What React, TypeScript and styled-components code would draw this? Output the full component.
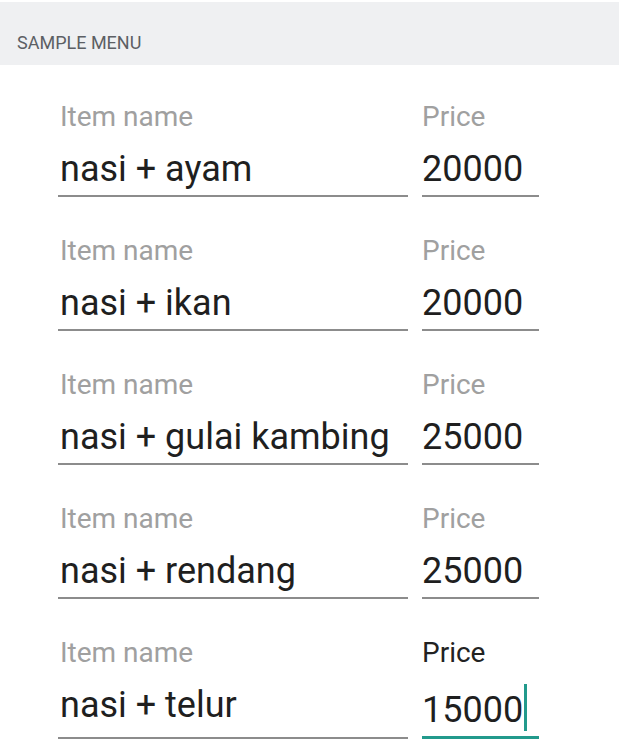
import styled, { createGlobalStyle } from "styled-components";

const GlobalStyle = createGlobalStyle`
  html, body {
    margin: 0;
    padding: 0;
    background: #ffffff;
  }
  body {
    font-family: Roboto, "Noto Sans", Arial, sans-serif;
  }
`;

const menu = [
  { name: "nasi + ayam", price: "20000" },
  { name: "nasi + ikan", price: "20000" },
  { name: "nasi + gulai kambing", price: "25000" },
  { name: "nasi + rendang", price: "25000" },
  { name: "nasi + telur", price: "15000", focused: true },
];

function App() {
  return (
    <>
      <GlobalStyle />
      <Page>
        <Header>SAMPLE MENU</Header>
        <List>
          {menu.map((item, index) => (
            <Row key={index}>
              <Field $width={350} $inset={2}>
                <Label>Item name</Label>
                <Value>{item.name}</Value>
              </Field>
              <Field $width={117} $focused={item.focused}>
                <Label $focused={item.focused}>Price</Label>
                <Value>
                  {item.price}
                  {item.focused && <Caret />}
                </Value>
              </Field>
            </Row>
          ))}
        </List>
      </Page>
    </>
  );
}
export default App;

const Page = styled.div`
  width: 619px;
  min-height: 750px;
  background: #ffffff;
  padding-top: 2px;
`;

const Header = styled.div`
  height: 63px;
  box-sizing: border-box;
  padding: 30px 0 0 17px;
  background: #eff0f2;
  color: #5c5f64;
  font-size: 18px;
  line-height: 22px;
`;

const List = styled.div`
  padding: 37px 0 0 58px;
  display: flex;
  flex-direction: column;
  gap: 39px;
`;

const Row = styled.div`
  display: flex;
  gap: 14px;
`;

const Field = styled.div<{ $width: number; $inset?: number; $focused?: boolean }>`
  width: ${(p) => p.$width}px;
  box-sizing: border-box;
  padding: 0 0 5px ${(p) => p.$inset ?? 0}px;
  display: flex;
  flex-direction: column;
  border-bottom: ${(p) => (p.$focused ? "3px solid #229a8c" : "2px solid #8c8c8c")};
`;

const Label = styled.div<{ $focused?: boolean }>`
  font-size: 28px;
  line-height: 30px;
  color: ${(p) => (p.$focused ? "#222222" : "#a0a0a0")};
  margin-bottom: 16px;
`;

const Value = styled.div`
  font-size: 36px;
  line-height: 42px;
  color: #1f1f1f;
  white-space: nowrap;
`;

const Caret = styled.span`
  display: inline-block;
  width: 3px;
  height: 47px;
  margin-left: 1px;
  vertical-align: -9px;
  background: #229a8c;
`;
